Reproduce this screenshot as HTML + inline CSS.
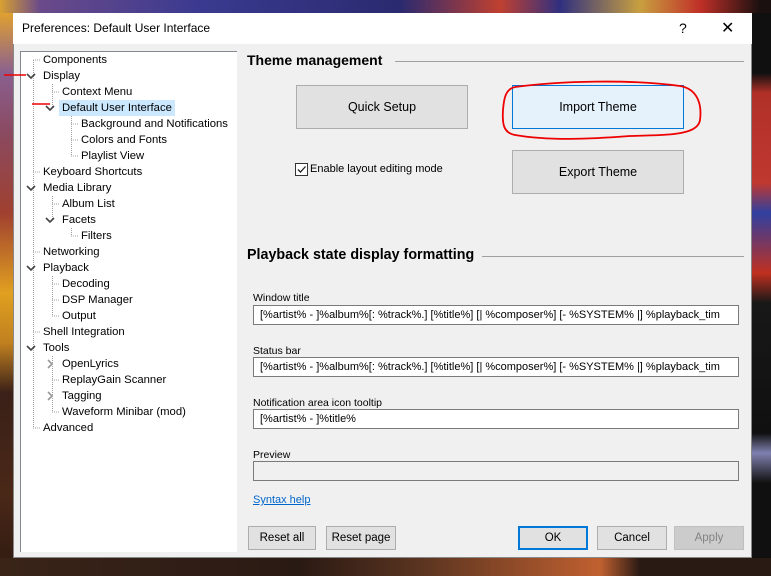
<!DOCTYPE html>
<html><head><meta charset="utf-8"><style>
*{margin:0;padding:0;box-sizing:border-box}
body{width:771px;height:576px;overflow:hidden;position:relative;font-family:"Liberation Sans",sans-serif;font-size:12px;color:#000;background:#2a1a14}
.a{position:absolute}
.bgt{left:0;top:0;width:771px;height:13px;background:linear-gradient(90deg,#d9a030 0,#6a4a8a 40px,#3a3a90 200px,#2a2a70 400px,#c04030 500px,#303080 560px,#c8a040 640px,#c03028 700px,#1a1010 760px)}
.bgl{left:0;top:13px;width:13px;height:563px;background:linear-gradient(180deg,#e0a030 0,#8a6090 60px,#8a4a60 120px,#a04030 200px,#e0a020 280px,#c08020 330px,#3a2018 380px,#4a2818 480px,#2a1810 576px)}
.bgr{left:752px;top:13px;width:19px;height:563px;background:linear-gradient(180deg,#101010 0,#101010 60px,#b03028 80px,#c03830 170px,#3040a0 200px,#c03020 260px,#181818 290px,#101010 420px,#8080b0 440px,#101010 470px,#101010 576px)}
.bgb{left:0;top:558px;width:771px;height:18px;background:linear-gradient(90deg,#3a2418,#2a1a14 300px,#5a3420 420px,#c06030 600px,#2a1a14 640px)}
.dlg{left:13px;top:13px;width:739px;height:545px;background:#f0f0f0;border:1px solid #888}
.title{left:13px;top:13px;width:739px;height:31px;background:#fff}
.tree{left:20px;top:51px;width:217px;height:501px;background:#fff;border:1px solid #828790;border-right:none;border-bottom:none}
.ti{position:absolute;height:16px;line-height:16px;white-space:nowrap;font-size:11.3px}
.btn{position:absolute;background:#e1e1e1;border:1px solid #adadad;text-align:center;font-size:12.5px}
.inp{position:absolute;left:253px;width:486px;height:20px;background:#fff;border:1px solid #7a7a7a;padding-left:6px;line-height:18px;white-space:nowrap;overflow:hidden;font-size:11px}
.lbl{position:absolute;left:253px;font-size:10.5px}
.h{position:absolute;font-weight:bold;font-size:14px}
.line{position:absolute;height:1px;background:#a0a0a0}
.sb{position:absolute;top:526px;height:24px;background:#e1e1e1;border:1px solid #adadad;text-align:center;line-height:22px;font-size:11.5px}
</style></head><body>
<div class="a bgt"></div><div class="a bgl"></div><div class="a bgr"></div><div class="a bgb"></div>
<div class="a dlg"></div>
<div class="a title"></div>
<div class="a" style="left:22px;top:21px;font-size:12px">Preferences: Default User Interface</div>
<div class="a" style="left:679px;top:20px;font-size:14px">?</div>
<div class="a" style="left:721px;top:18px;font-size:16px">✕</div>
<div class="a tree"></div>
<svg class="a" style="left:0;top:0" width="240" height="440">
<g stroke="#a0a0a0" stroke-dasharray="1,1" fill="none">
<path d="M33.5 60V428M33 60h8M52.5 84V108M52 92h8M71.5 116V156M71 124h8M71 140h8M71 156h8M33 172h8M52.5 196V220M52 204h8M71.5 228V236M71 236h8M33 252h8M52.5 276V316M52 284h8M52 300h8M52 316h8M33 332h8M52.5 356V412M52 380h8M52 412h8M33 428h8"/>
</g>
<g stroke="#444" stroke-width="1.6" fill="none">
<path d="M27 74l4 4 4-4M46 106l4 4 4-4M27 186l4 4 4-4M46 218l4 4 4-4M27 266l4 4 4-4M27 346l4 4 4-4"/>
<path d="M48 360l4 4-4 4M48 392l4 4-4 4" stroke="#999"/>
</g>
<path d="M4 75h22M32 104h18" stroke="#e00" stroke-width="1.5"/>
</svg>
<div class="a" style="left:59px;top:100px;width:116px;height:16px;background:#cce8ff"></div>
<div class="ti" style="left:43px;top:52px">Components</div>
<div class="ti" style="left:43px;top:68px">Display</div>
<div class="ti" style="left:62px;top:84px">Context Menu</div>
<div class="ti" style="left:62px;top:100px">Default User Interface</div>
<div class="ti" style="left:81px;top:116px">Background and Notifications</div>
<div class="ti" style="left:81px;top:132px">Colors and Fonts</div>
<div class="ti" style="left:81px;top:148px">Playlist View</div>
<div class="ti" style="left:43px;top:164px">Keyboard Shortcuts</div>
<div class="ti" style="left:43px;top:180px">Media Library</div>
<div class="ti" style="left:62px;top:196px">Album List</div>
<div class="ti" style="left:62px;top:212px">Facets</div>
<div class="ti" style="left:81px;top:228px">Filters</div>
<div class="ti" style="left:43px;top:244px">Networking</div>
<div class="ti" style="left:43px;top:260px">Playback</div>
<div class="ti" style="left:62px;top:276px">Decoding</div>
<div class="ti" style="left:62px;top:292px">DSP Manager</div>
<div class="ti" style="left:62px;top:308px">Output</div>
<div class="ti" style="left:43px;top:324px">Shell Integration</div>
<div class="ti" style="left:43px;top:340px">Tools</div>
<div class="ti" style="left:62px;top:356px">OpenLyrics</div>
<div class="ti" style="left:62px;top:372px">ReplayGain Scanner</div>
<div class="ti" style="left:62px;top:388px">Tagging</div>
<div class="ti" style="left:62px;top:404px">Waveform Minibar (mod)</div>
<div class="ti" style="left:43px;top:420px">Advanced</div>

<div class="h" style="left:247px;top:52px">Theme management</div>
<div class="line" style="left:395px;top:61px;width:349px"></div>
<div class="btn" style="left:296px;top:85px;width:172px;height:44px;line-height:42px">Quick Setup</div>
<div class="btn" style="left:512px;top:85px;width:172px;height:44px;line-height:42px;background:#e5f1fb;border-color:#0078d7">Import Theme</div>
<svg class="a" style="left:490px;top:75px" width="215" height="70"><path d="M25 12C70 6 140 4 190 11C208 14 212 30 210 45C208 60 180 60 140 61C100 64 60 66 25 60C14 58 12 50 13 35C14 22 16 14 25 12" fill="none" stroke="#e00" stroke-width="1.8"/></svg>
<div class="a" style="left:295px;top:163px;width:13px;height:13px;border:1px solid #333;background:#fff"></div>
<svg class="a" style="left:295px;top:163px" width="13" height="13"><path d="M3 6.5l2.5 2.5 5-5.5" stroke="#222" stroke-width="1.3" fill="none"/></svg>
<div class="a" style="left:310px;top:163px;font-size:11px">Enable layout editing mode</div>
<div class="btn" style="left:512px;top:150px;width:172px;height:44px;line-height:42px">Export Theme</div>

<div class="h" style="left:247px;top:247px;font-size:14.3px">Playback state display formatting</div>
<div class="line" style="left:482px;top:256px;width:262px"></div>
<div class="lbl" style="top:292px">Window title</div>
<div class="inp" style="top:305px">[%artist% - ]%album%[: %track%.] [%title%] [| %composer%] [- %SYSTEM% |] %playback_tim</div>
<div class="lbl" style="top:345px">Status bar</div>
<div class="inp" style="top:357px">[%artist% - ]%album%[: %track%.] [%title%] [| %composer%] [- %SYSTEM% |] %playback_tim</div>
<div class="lbl" style="top:397px">Notification area icon tooltip</div>
<div class="inp" style="top:409px">[%artist% - ]%title%</div>
<div class="lbl" style="top:449px">Preview</div>
<div class="inp" style="top:461px;background:#f0f0f0"></div>
<div class="a" style="left:253px;top:494px;color:#0066cc;text-decoration:underline;font-size:11px">Syntax help</div>
<div class="sb" style="left:248px;width:68px">Reset all</div>
<div class="sb" style="left:326px;width:70px">Reset page</div>
<div class="sb" style="left:518px;width:70px;border:2px solid #0078d7;line-height:20px">OK</div>
<div class="sb" style="left:597px;width:70px">Cancel</div>
<div class="sb" style="left:674px;width:70px;background:#ccc;border-color:#bfbfbf;color:#838383">Apply</div>
</body></html>
